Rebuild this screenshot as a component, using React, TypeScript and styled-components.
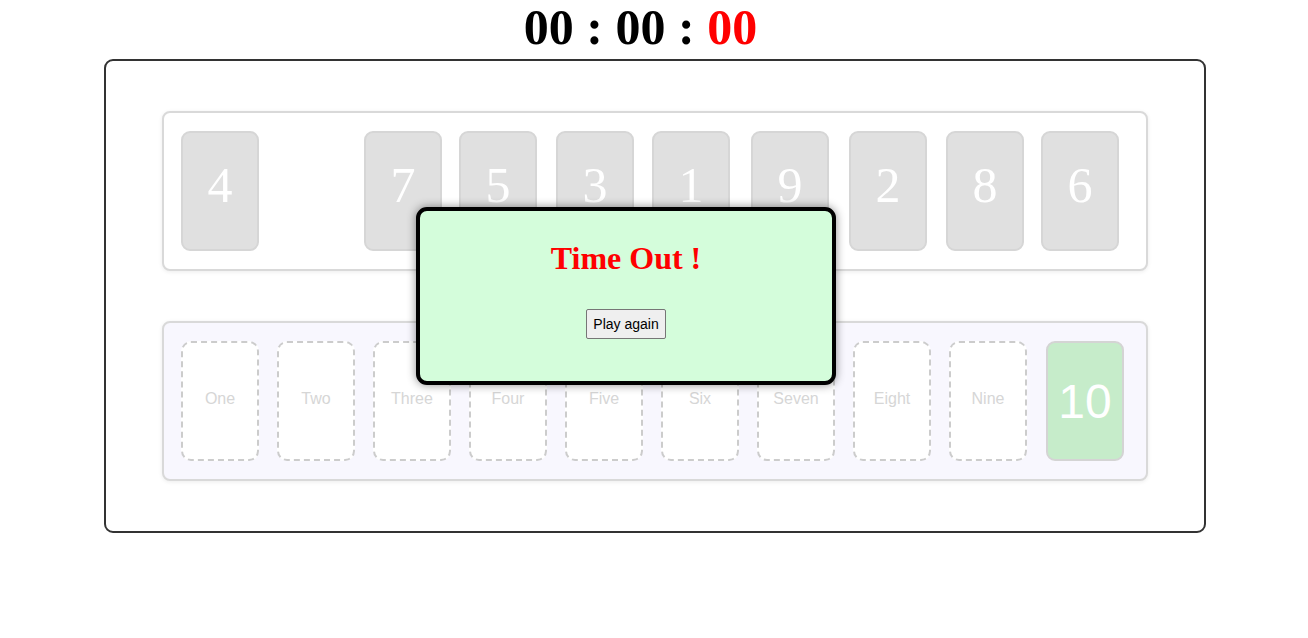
import React from "react";
import styled, { createGlobalStyle } from "styled-components";

const Global = createGlobalStyle`
  html, body { margin: 0; padding: 0; background: #ffffff; }
  body { font-family: "Liberation Serif", "Times New Roman", serif; }
`;

const Page = styled.div`
  position: relative;
  width: 1308px;
  min-height: 638px;
`;

const Timer = styled.h1`
  margin: 0 0 4px 0;
  padding-right: 27px;
  text-align: center;
  font-family: "Liberation Serif", "Times New Roman", serif;
  font-weight: 700;
  font-size: 50px;
  line-height: 55px;
  color: #000;
`;

const Seconds = styled.span`
  color: #ff0000;
`;

const Frame = styled.div`
  width: 986px;
  margin: 0 0 0 104px;
  padding: 50px 56px;
  border: 2px solid #333333;
  border-radius: 9px;
  display: flex;
  flex-direction: column;
  gap: 50px;
`;

const Tray = styled.div<{ $tint?: boolean }>`
  display: flex;
  align-items: flex-start;
  padding: 18px 17px;
  border: 2px solid #d9d9d9;
  border-radius: 8px;
  background: ${(p) => (p.$tint ? "#f8f7fe" : "#ffffff")};
  box-shadow: 0 1px 4px rgba(0, 0, 0, 0.08);
`;

const SlotRow = styled(Tray)`
  gap: 18px;
`;

const NumberCard = styled.div<{ $ml: number }>`
  box-sizing: border-box;
  width: 78px;
  height: 120px;
  margin-left: ${(p) => p.$ml}px;
  flex: none;
  display: flex;
  align-items: center;
  justify-content: center;
  padding-bottom: 12px;
  background: #e0e0e0;
  border: 2px solid #d6d6d6;
  border-radius: 9px;
  color: #ffffff;
  font-family: "Liberation Serif", "Times New Roman", serif;
  font-size: 50px;
`;

const Slot = styled.div`
  box-sizing: border-box;
  width: 78px;
  height: 120px;
  flex: none;
  display: flex;
  align-items: center;
  justify-content: center;
  padding-bottom: 4px;
  background: #ffffff;
  border: 2px dashed #cccccc;
  border-radius: 10px;
  color: #d6d6d6;
  font-family: "Liberation Sans", Arial, sans-serif;
  font-size: 16px;
`;

const PlacedCard = styled.div`
  box-sizing: border-box;
  width: 78px;
  height: 120px;
  margin-left: 1px;
  flex: none;
  display: flex;
  align-items: center;
  justify-content: center;
  background: #c6ecca;
  border: 2px solid #d4d4d4;
  border-radius: 9px;
  color: #ffffff;
  font-family: "Liberation Sans", Arial, sans-serif;
  font-size: 48px;
`;

const Modal = styled.div`
  position: absolute;
  left: 416px;
  top: 207px;
  box-sizing: border-box;
  width: 420px;
  height: 178px;
  padding-top: 29px;
  display: flex;
  flex-direction: column;
  align-items: center;
  gap: 32px;
  background: #d4fddb;
  border: 4px solid #000000;
  border-radius: 11px;
  box-shadow: 0 0 10px rgba(0, 0, 0, 0.45);
`;

const ModalTitle = styled.h2`
  margin: 0;
  font-family: "Liberation Serif", "Times New Roman", serif;
  font-weight: 700;
  font-size: 32px;
  line-height: 37px;
  color: #ff0000;
`;

const PlayButton = styled.button`
  box-sizing: border-box;
  height: 30px;
  padding: 0 6px;
  font-family: "Liberation Sans", Arial, sans-serif;
  font-size: 14px;
  color: #000;
  background: #efefef;
  border: 1px solid #767676;
  border-radius: 2px;
`;

const topCards: { n: number; ml: number }[] = [
  { n: 4, ml: 0 },
  { n: 7, ml: 105 },
  { n: 5, ml: 17 },
  { n: 3, ml: 19 },
  { n: 1, ml: 18 },
  { n: 9, ml: 21 },
  { n: 2, ml: 20 },
  { n: 8, ml: 19 },
  { n: 6, ml: 17 },
];

const slotNames = ["One", "Two", "Three", "Four", "Five", "Six", "Seven", "Eight", "Nine"];

export default function App() {
  return (
    <Page>
      <Global />
      <Timer>
        00 : 00 : <Seconds>00</Seconds>
      </Timer>
      <Frame>
        <Tray>
          {topCards.map((c) => (
            <NumberCard key={c.n} $ml={c.ml}>
              {c.n}
            </NumberCard>
          ))}
        </Tray>
        <SlotRow $tint>
          {slotNames.map((s) => (
            <Slot key={s}>{s}</Slot>
          ))}
          <PlacedCard>10</PlacedCard>
        </SlotRow>
      </Frame>
      <Modal>
        <ModalTitle>Time Out !</ModalTitle>
        <PlayButton>Play again</PlayButton>
      </Modal>
    </Page>
  );
}
